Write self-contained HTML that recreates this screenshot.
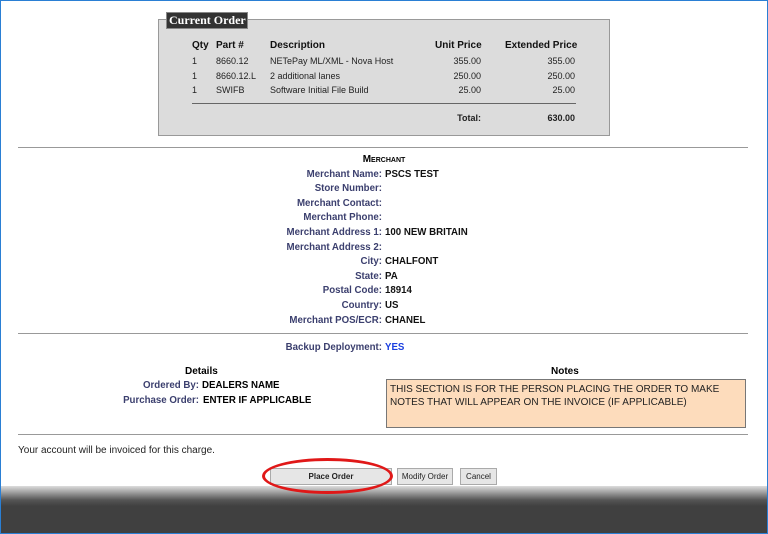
<!DOCTYPE html>
<html><head><style>
body{margin:0;width:768px;height:534px;overflow:hidden;background:#fff;font-family:"Liberation Sans",Arial,sans-serif;position:relative}
.a{position:absolute;white-space:nowrap}
.frame{position:absolute;left:0;top:0;width:766px;height:532px;border:1px solid #2a7fd4;pointer-events:none;z-index:10}
.box{position:absolute;left:158px;top:19px;width:450px;height:115px;background:#dcdcdc;border:1px solid #999}
.leg{position:absolute;left:166px;top:12px;width:78px;height:15px;background:#333;color:#fff;font:bold 12px "Liberation Serif",serif;line-height:15px;padding-left:2px;border:1px solid #888}
.t{font-size:9px;color:#222}
.h{font-size:10px;font-weight:bold;color:#111}
.hr{position:absolute;left:18px;width:730px;height:1px;background:#999}
.lbl{position:absolute;right:386px;font-size:9.7px;font-weight:bold;color:#3b3f6e;white-space:nowrap}
.val{position:absolute;left:385px;font-size:9.7px;font-weight:bold;color:#111;white-space:nowrap}
.btn{position:absolute;top:468px;height:15px;background:#e6e6e6;border:1px solid #aaa;font-size:8px;line-height:15px;text-align:center;color:#222}
</style></head><body>
<div class="frame"></div>
<div class="box"></div>
<div class="leg">Current Order</div>
<div class="a h" style="left:192px;top:40px">Qty</div>
<div class="a h" style="left:216px;top:40px">Part #</div>
<div class="a h" style="left:270px;top:40px">Description</div>
<div class="a h" style="left:435px;top:40px">Unit Price</div>
<div class="a h" style="left:505px;top:40px">Extended Price</div>
<div class="a t" style="left:192px;top:56px">1</div><div class="a t" style="left:216px;top:56px">8660.12</div><div class="a t" style="left:270px;top:56px">NETePay ML/XML - Nova Host</div><div class="a t" style="right:287px;top:56px">355.00</div><div class="a t" style="right:193px;top:56px">355.00</div>
<div class="a t" style="left:192px;top:71px">1</div><div class="a t" style="left:216px;top:71px">8660.12.L</div><div class="a t" style="left:270px;top:71px">2 additional lanes</div><div class="a t" style="right:287px;top:71px">250.00</div><div class="a t" style="right:193px;top:71px">250.00</div>
<div class="a t" style="left:192px;top:85px">1</div><div class="a t" style="left:216px;top:85px">SWIFB</div><div class="a t" style="left:270px;top:85px">Software Initial File Build</div><div class="a t" style="right:287px;top:85px">25.00</div><div class="a t" style="right:193px;top:85px">25.00</div>
<div class="a" style="left:192px;top:103px;width:384px;height:1px;background:#666"></div>
<div class="a t" style="right:287px;top:113px;font-weight:bold">Total:</div>
<div class="a t" style="right:193px;top:113px;font-weight:bold">630.00</div>
<div class="hr" style="top:147px"></div>
<div class="a" style="left:0;width:768px;text-align:center;top:154px;font-size:10px;font-weight:bold;font-variant:small-caps">Merchant</div>
<div class="lbl" style="top:169px">Merchant Name:</div><div class="val" style="top:169px">PSCS TEST</div>
<div class="lbl" style="top:183px">Store Number:</div>
<div class="lbl" style="top:198px">Merchant Contact:</div>
<div class="lbl" style="top:212px">Merchant Phone:</div>
<div class="lbl" style="top:227px">Merchant Address 1:</div><div class="val" style="top:227px">100 NEW BRITAIN</div>
<div class="lbl" style="top:242px">Merchant Address 2:</div>
<div class="lbl" style="top:256px">City:</div><div class="val" style="top:256px">CHALFONT</div>
<div class="lbl" style="top:271px">State:</div><div class="val" style="top:271px">PA</div>
<div class="lbl" style="top:285px">Postal Code:</div><div class="val" style="top:285px">18914</div>
<div class="lbl" style="top:300px">Country:</div><div class="val" style="top:300px">US</div>
<div class="lbl" style="top:315px">Merchant POS/ECR:</div><div class="val" style="top:315px">CHANEL</div>
<div class="hr" style="top:333px"></div>
<div class="lbl" style="top:342px">Backup Deployment:</div><div class="val" style="top:342px;color:#1a3fe0">YES</div>
<div class="a" style="left:185px;top:366px;font-size:10px;font-weight:bold">Details</div>
<div class="a" style="left:551px;top:366px;font-size:10px;font-weight:bold">Notes</div>
<div class="a" style="right:569px;top:380px;font-size:9.7px;font-weight:bold;color:#3b3f6e">Ordered By:</div><div class="a" style="left:202px;top:380px;font-size:9.7px;font-weight:bold">DEALERS NAME</div>
<div class="a" style="right:569px;top:395px;font-size:9.7px;font-weight:bold;color:#3b3f6e">Purchase Order:</div><div class="a" style="left:203px;top:395px;font-size:9.7px;font-weight:bold">ENTER IF APPLICABLE</div>
<div class="a" style="left:386px;top:379px;width:355px;height:44px;background:#fddcbc;border:1px solid #777;font-size:10px;line-height:13px;padding:3px 0 0 3px;white-space:normal;color:#222">THIS SECTION IS FOR THE PERSON PLACING THE ORDER TO MAKE NOTES THAT WILL APPEAR ON THE INVOICE (IF APPLICABLE)</div>
<div class="hr" style="top:434px"></div>
<div class="a" style="left:18px;top:445px;font-size:10px;color:#222">Your account will be invoiced for this charge.</div>
<div class="btn" style="left:270px;width:120px;font-weight:bold">Place Order</div>
<div class="btn" style="left:397px;width:54px">Modify Order</div>
<div class="btn" style="left:460px;width:35px">Cancel</div>
<div class="a" style="left:0;top:486px;width:768px;height:48px;background:linear-gradient(#ddd 0px,#555 14px,#404040 20px,#404040 100%)"></div>
<div class="a" style="left:262px;top:458px;width:131px;height:36px;border:3px solid #e01818;border-radius:50%;box-sizing:border-box;z-index:5"></div>
</body></html>
